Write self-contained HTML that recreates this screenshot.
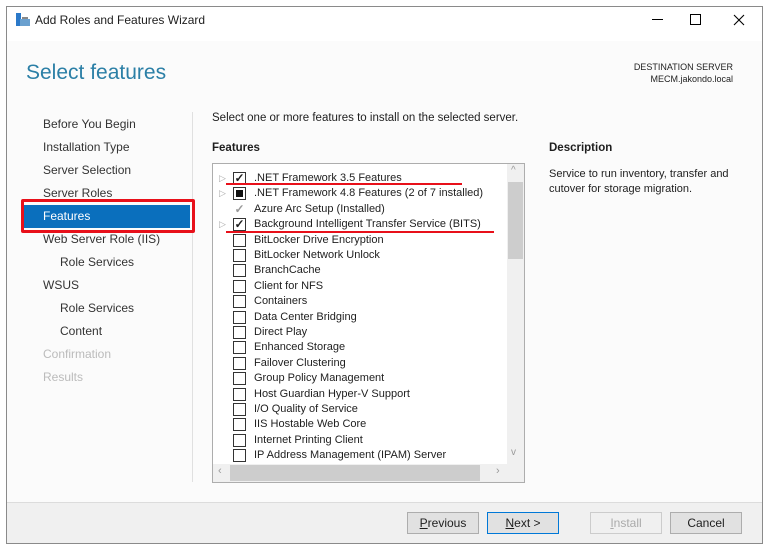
<!DOCTYPE html>
<html><head><style>
*{margin:0;padding:0;box-sizing:border-box}
body{width:768px;height:551px;background:#fff;font-family:"Liberation Sans",sans-serif;position:relative;overflow:hidden;color:#1e1e1e}
.a{position:absolute;white-space:nowrap}
.win{position:absolute;left:6px;top:6px;width:757px;height:538px;border:1px solid #8a8a8a;background:#fbfbfb}
.nav{font-size:12px;color:#333}
.row{position:absolute;left:0;height:15px;font-size:11px;line-height:15px}
.cb{position:absolute;left:20px;top:1px;width:13px;height:13px;border:1px solid #333;background:#fff}
.ck{font-size:12px;line-height:11px;text-align:center;font-weight:bold}
.tx{position:absolute;left:41px}
.btn{position:absolute;top:512px;height:22px;border:1px solid #adadad;background:#e1e1e1;font-size:12px;text-align:center;line-height:20px}
</style></head><body>
<div class="win">
<div style="position:absolute;left:0;top:0;width:755px;height:34px;background:#fff"></div>
<div style="position:absolute;left:0;top:495px;width:755px;height:41px;background:#f0f0f0;border-top:1px solid #dcdcdc"></div>
</div>
<svg class="a" style="left:15px;top:12px" width="16" height="16"><rect x="1" y="1" width="5" height="13" fill="#2b79c9"/><rect x="5" y="7" width="10" height="7" fill="#6aa0cf"/><rect x="7" y="5" width="6" height="2" fill="#888"/></svg>
<div class="a" style="left:35px;top:13px;font-size:12px">Add Roles and Features Wizard</div>
<div class="a" style="left:652px;top:19px;width:11px;height:1px;background:#000"></div>
<div class="a" style="left:690px;top:14px;width:11px;height:11px;border:1px solid #000"></div>
<svg class="a" style="left:733px;top:14px" width="12" height="12"><path d="M1 1L11 11M11 1L1 11" stroke="#000" stroke-width="1.1"/></svg>
<div class="a" style="left:26px;top:61px;font-size:21px;color:#2b7fa6">Select features</div>
<div class="a" style="left:600px;top:61px;width:133px;text-align:right;font-size:9px;line-height:12px;color:#222">DESTINATION SERVER<br>MECM.jakondo.local</div>
<div class="a" style="left:192px;top:112px;width:1px;height:370px;background:#e0e0e0"></div>
<div class="a" style="left:24px;top:205px;width:166px;height:23px;background:#0a6fbd"></div>
<div class="a" style="left:21px;top:199px;width:174px;height:34px;border:3px solid #e8101a;border-radius:2px"></div>
<div class="a nav" style="left:43px;top:113px;line-height:23px">Before You Begin<br>Installation Type<br>Server Selection<br>Server Roles<br><span style="color:#fff">Features</span><br>Web Server Role (IIS)<br><span style="padding-left:17px">Role Services</span><br>WSUS<br><span style="padding-left:17px">Role Services</span><br><span style="padding-left:17px">Content</span><br><span style="color:#bbb">Confirmation</span><br><span style="color:#bbb">Results</span></div>
<div class="a" style="left:212px;top:112px;font-size:11.5px">Select one or more features to install on the selected server.</div>
<div class="a" style="left:212px;top:142px;font-size:11.5px;font-weight:bold">Features</div>
<div class="a" style="left:549px;top:142px;font-size:11.5px;font-weight:bold">Description</div>
<div class="a" style="left:549px;top:167px;font-size:11px;line-height:15px">Service to run inventory, transfer and<br>cutover for storage migration.</div>
<div class="a" style="left:212px;top:163px;width:313px;height:320px;border:1px solid #adadad;background:#fff;overflow:hidden">
<div style="position:absolute;left:0;top:7px;width:294px">
<div class="row" style="top:0"><span class="a" style="left:6px;color:#aaa;font-size:9px">▷</span><div class="cb ck">✓</div><span class="tx">.NET Framework 3.5 Features</span></div>
<div class="row" style="top:15.4px"><span class="a" style="left:6px;color:#aaa;font-size:9px">▷</span><div class="cb"><div style="margin:2px;width:7px;height:7px;background:#111"></div></div><span class="tx">.NET Framework 4.8 Features (2 of 7 installed)</span></div>
<div class="row" style="top:30.8px"><div class="cb ck" style="border:none;color:#999;line-height:13px">✓</div><span class="tx">Azure Arc Setup (Installed)</span></div>
<div class="row" style="top:46.2px"><span class="a" style="left:6px;color:#aaa;font-size:9px">▷</span><div class="cb ck">✓</div><span class="tx">Background Intelligent Transfer Service (BITS)</span></div>
<div class="row" style="top:61.6px"><div class="cb"></div><span class="tx">BitLocker Drive Encryption</span></div>
<div class="row" style="top:77px"><div class="cb"></div><span class="tx">BitLocker Network Unlock</span></div>
<div class="row" style="top:92.4px"><div class="cb"></div><span class="tx">BranchCache</span></div>
<div class="row" style="top:107.8px"><div class="cb"></div><span class="tx">Client for NFS</span></div>
<div class="row" style="top:123.2px"><div class="cb"></div><span class="tx">Containers</span></div>
<div class="row" style="top:138.6px"><div class="cb"></div><span class="tx">Data Center Bridging</span></div>
<div class="row" style="top:154px"><div class="cb"></div><span class="tx">Direct Play</span></div>
<div class="row" style="top:169.4px"><div class="cb"></div><span class="tx">Enhanced Storage</span></div>
<div class="row" style="top:184.8px"><div class="cb"></div><span class="tx">Failover Clustering</span></div>
<div class="row" style="top:200.2px"><div class="cb"></div><span class="tx">Group Policy Management</span></div>
<div class="row" style="top:215.6px"><div class="cb"></div><span class="tx">Host Guardian Hyper-V Support</span></div>
<div class="row" style="top:231px"><div class="cb"></div><span class="tx">I/O Quality of Service</span></div>
<div class="row" style="top:246.4px"><div class="cb"></div><span class="tx">IIS Hostable Web Core</span></div>
<div class="row" style="top:261.8px"><div class="cb"></div><span class="tx">Internet Printing Client</span></div>
<div class="row" style="top:277.2px"><div class="cb"></div><span class="tx">IP Address Management (IPAM) Server</span></div>
</div>
<div style="position:absolute;left:294px;top:0;width:17px;height:300px;background:#f0f0f0"><div style="position:absolute;top:18px;left:1px;width:15px;height:77px;background:#cdcdcd"></div><span class="a" style="left:4px;top:1px;font-size:10px;color:#999">^</span><span class="a" style="left:4px;top:283px;font-size:10px;color:#999">v</span></div>
<div style="position:absolute;left:0;top:300px;width:311px;height:18px;background:#f0f0f0"><div style="position:absolute;left:17px;top:1px;width:250px;height:16px;background:#cdcdcd"></div><span class="a" style="left:5px;top:1px;font-size:11px;color:#999">‹</span><span class="a" style="left:283px;top:1px;font-size:11px;color:#999">›</span></div>
</div>
<div class="a" style="left:226px;top:183px;width:236px;height:2px;background:#e8101a"></div>
<div class="a" style="left:226px;top:231px;width:268px;height:2px;background:#e8101a"></div>
<div class="btn" style="left:407px;width:72px"><u>P</u>revious</div>
<div class="btn" style="left:487px;width:72px;border-color:#0078d7"><u>N</u>ext &gt;</div>
<div class="btn" style="left:590px;width:72px;color:#aaa;border-color:#ccc;background:#f0f0f0"><u>I</u>nstall</div>
<div class="btn" style="left:670px;width:72px">Cancel</div>
</body></html>
